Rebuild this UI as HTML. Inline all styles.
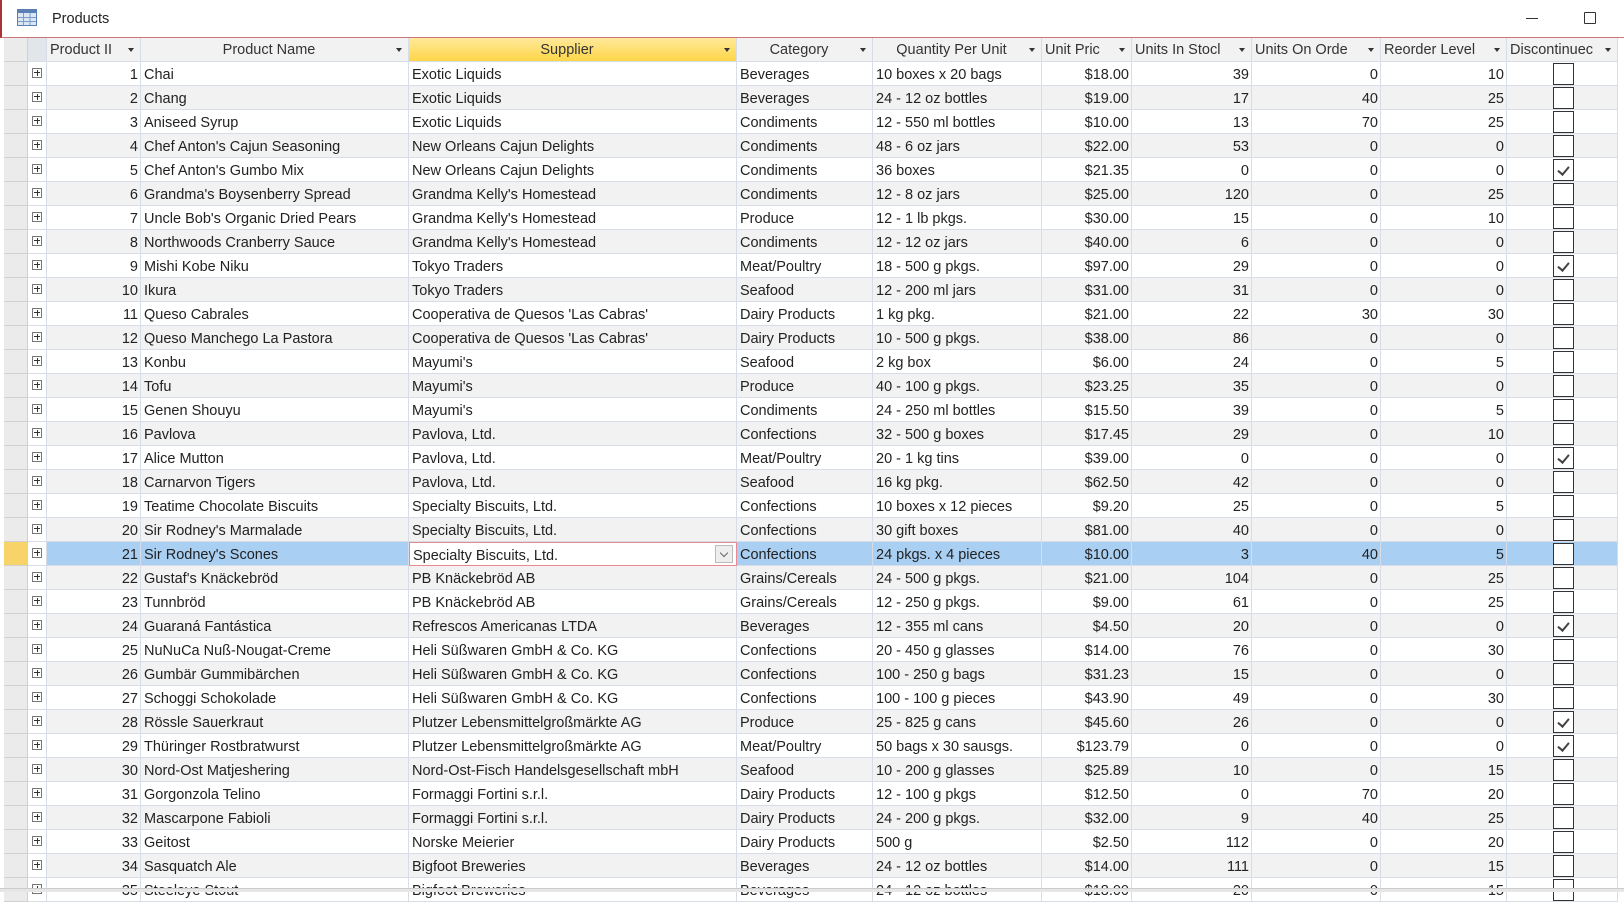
<!DOCTYPE html>
<html><head><meta charset="utf-8"><style>
*{box-sizing:border-box;margin:0;padding:0}
body{width:1624px;height:892px;overflow:hidden;background:#fff;font-family:"Liberation Sans",sans-serif;font-size:14.5px;color:#222;position:relative}
#title{position:absolute;left:0;top:0;width:1624px;height:38px;border-left:2px solid #a33;border-bottom:1px solid #c8777a;background:#fff}
#title .t{position:absolute;left:50px;top:11px;font-size:14.5px;color:#222}
#grid{position:absolute;left:4px;top:38px;width:1614px}
.r{display:flex;height:24px}
.c{height:24px;border-right:1px solid #d7dde6;border-bottom:1px solid #d7dde6;white-space:nowrap;overflow:hidden;line-height:26px;padding:0 3px}
.n{text-align:right;padding-right:2px}
.r:nth-child(odd) .c{background:#f2f2f2}
.r .c.s{background:#ebebeb !important;border-right:1px solid #d0d0d0;border-bottom:1px solid #d0d0d0}
.h .c{background:#e2e5ea;color:#333;position:relative;padding-right:14px;line-height:25px}
.h .c:after{content:"";position:absolute;right:6px;top:10px;border:3px solid transparent;border-top:4px solid #333}
.h .c.s:after,.h .c.e:after{display:none}
.h .y{background:linear-gradient(#ffe99a,#fdd648)!important}
.e{background:#fff !important;position:relative}
.e i{position:absolute;left:4px;top:6px;width:10px;height:10px;border:1px solid #777;background:#fff}
.e i:before{content:"";position:absolute;left:1px;top:3px;width:6px;height:1px;background:#333}
.e i:after{content:"";position:absolute;left:3.5px;top:1px;width:1px;height:6px;background:#333}
.w0{width:24px}.w1{width:19px}.w2{width:94px}.w3{width:268px}.w4{width:328px}.w5{width:136px}.w6{width:169px}.w7{width:90px}.w8{width:120px}.w9{width:129px}.w10{width:126px}.w11{width:111px}
.d{position:relative}
.d b{position:absolute;left:46px;top:1px;width:21px;height:22px;border:1px solid #333;background:#fff}
.d b.k:after{content:"";position:absolute;left:6px;top:4px;width:5px;height:9px;border-right:2px solid #444;border-bottom:2px solid #444;transform:rotate(40deg)}
.sel .c{background:#a9cff2 !important}
.sel .c.s{background:#f8d468 !important}
.sel .c.e{background:#fff !important}
.sel .ed{background:#fff !important;border:1px solid #e88a94;position:relative}
.ed u{position:absolute;right:3px;top:2px;width:18px;height:18px;border:1px solid #bbb;background:#eee;text-decoration:none}
.ed u:after{content:"";position:absolute;left:5px;top:4px;width:5px;height:5px;border-right:1px solid #666;border-bottom:1px solid #666;transform:rotate(45deg)}
</style></head><body>
<div id="title">
<svg style="position:absolute;left:15px;top:9px" width="20" height="17" viewBox="0 0 20 17"><rect x="0.5" y="0.5" width="19" height="16" fill="#dbe6f4" stroke="#5a7fb4"/><rect x="1" y="1" width="18" height="3" fill="#5a7fb4"/><path d="M1 8.5H19M1 12.5H19M6.5 4V16M13 4V16" stroke="#7d9cc8"/></svg>
<div class="t">Products</div>
<div style="position:absolute;left:1524px;top:18px;width:12px;height:1px;background:#333"></div>
<div style="position:absolute;left:1582px;top:12px;width:12px;height:12px;border:1px solid #333;border-radius:1px"></div>
</div>
<div id="grid">
<div class="r h"><div class="c s w0"></div><div class="c e w1" style="background:#e2e5ea!important"></div><div class="c w2">Product II</div><div class="c w3" style="text-align:center">Product Name</div><div class="c w4 y" style="text-align:center">Supplier</div><div class="c w5" style="text-align:center">Category</div><div class="c w6" style="text-align:center">Quantity Per Unit</div><div class="c w7">Unit Pric</div><div class="c w8">Units In Stocl</div><div class="c w9">Units On Orde</div><div class="c w10">Reorder Level</div><div class="c w11">Discontinuec</div></div>
<div class="r"><div class="c s w0"></div><div class="c e w1"><i></i></div><div class="c n w2">1</div><div class="c w3">Chai</div><div class="c w4">Exotic Liquids</div><div class="c w5">Beverages</div><div class="c w6">10 boxes x 20 bags</div><div class="c n w7">$18.00</div><div class="c n w8">39</div><div class="c n w9">0</div><div class="c n w10">10</div><div class="c d w11"><b></b></div></div>
<div class="r"><div class="c s w0"></div><div class="c e w1"><i></i></div><div class="c n w2">2</div><div class="c w3">Chang</div><div class="c w4">Exotic Liquids</div><div class="c w5">Beverages</div><div class="c w6">24 - 12 oz bottles</div><div class="c n w7">$19.00</div><div class="c n w8">17</div><div class="c n w9">40</div><div class="c n w10">25</div><div class="c d w11"><b></b></div></div>
<div class="r"><div class="c s w0"></div><div class="c e w1"><i></i></div><div class="c n w2">3</div><div class="c w3">Aniseed Syrup</div><div class="c w4">Exotic Liquids</div><div class="c w5">Condiments</div><div class="c w6">12 - 550 ml bottles</div><div class="c n w7">$10.00</div><div class="c n w8">13</div><div class="c n w9">70</div><div class="c n w10">25</div><div class="c d w11"><b></b></div></div>
<div class="r"><div class="c s w0"></div><div class="c e w1"><i></i></div><div class="c n w2">4</div><div class="c w3">Chef Anton's Cajun Seasoning</div><div class="c w4">New Orleans Cajun Delights</div><div class="c w5">Condiments</div><div class="c w6">48 - 6 oz jars</div><div class="c n w7">$22.00</div><div class="c n w8">53</div><div class="c n w9">0</div><div class="c n w10">0</div><div class="c d w11"><b></b></div></div>
<div class="r"><div class="c s w0"></div><div class="c e w1"><i></i></div><div class="c n w2">5</div><div class="c w3">Chef Anton's Gumbo Mix</div><div class="c w4">New Orleans Cajun Delights</div><div class="c w5">Condiments</div><div class="c w6">36 boxes</div><div class="c n w7">$21.35</div><div class="c n w8">0</div><div class="c n w9">0</div><div class="c n w10">0</div><div class="c d w11"><b class="k"></b></div></div>
<div class="r"><div class="c s w0"></div><div class="c e w1"><i></i></div><div class="c n w2">6</div><div class="c w3">Grandma's Boysenberry Spread</div><div class="c w4">Grandma Kelly's Homestead</div><div class="c w5">Condiments</div><div class="c w6">12 - 8 oz jars</div><div class="c n w7">$25.00</div><div class="c n w8">120</div><div class="c n w9">0</div><div class="c n w10">25</div><div class="c d w11"><b></b></div></div>
<div class="r"><div class="c s w0"></div><div class="c e w1"><i></i></div><div class="c n w2">7</div><div class="c w3">Uncle Bob's Organic Dried Pears</div><div class="c w4">Grandma Kelly's Homestead</div><div class="c w5">Produce</div><div class="c w6">12 - 1 lb pkgs.</div><div class="c n w7">$30.00</div><div class="c n w8">15</div><div class="c n w9">0</div><div class="c n w10">10</div><div class="c d w11"><b></b></div></div>
<div class="r"><div class="c s w0"></div><div class="c e w1"><i></i></div><div class="c n w2">8</div><div class="c w3">Northwoods Cranberry Sauce</div><div class="c w4">Grandma Kelly's Homestead</div><div class="c w5">Condiments</div><div class="c w6">12 - 12 oz jars</div><div class="c n w7">$40.00</div><div class="c n w8">6</div><div class="c n w9">0</div><div class="c n w10">0</div><div class="c d w11"><b></b></div></div>
<div class="r"><div class="c s w0"></div><div class="c e w1"><i></i></div><div class="c n w2">9</div><div class="c w3">Mishi Kobe Niku</div><div class="c w4">Tokyo Traders</div><div class="c w5">Meat/Poultry</div><div class="c w6">18 - 500 g pkgs.</div><div class="c n w7">$97.00</div><div class="c n w8">29</div><div class="c n w9">0</div><div class="c n w10">0</div><div class="c d w11"><b class="k"></b></div></div>
<div class="r"><div class="c s w0"></div><div class="c e w1"><i></i></div><div class="c n w2">10</div><div class="c w3">Ikura</div><div class="c w4">Tokyo Traders</div><div class="c w5">Seafood</div><div class="c w6">12 - 200 ml jars</div><div class="c n w7">$31.00</div><div class="c n w8">31</div><div class="c n w9">0</div><div class="c n w10">0</div><div class="c d w11"><b></b></div></div>
<div class="r"><div class="c s w0"></div><div class="c e w1"><i></i></div><div class="c n w2">11</div><div class="c w3">Queso Cabrales</div><div class="c w4">Cooperativa de Quesos 'Las Cabras'</div><div class="c w5">Dairy Products</div><div class="c w6">1 kg pkg.</div><div class="c n w7">$21.00</div><div class="c n w8">22</div><div class="c n w9">30</div><div class="c n w10">30</div><div class="c d w11"><b></b></div></div>
<div class="r"><div class="c s w0"></div><div class="c e w1"><i></i></div><div class="c n w2">12</div><div class="c w3">Queso Manchego La Pastora</div><div class="c w4">Cooperativa de Quesos 'Las Cabras'</div><div class="c w5">Dairy Products</div><div class="c w6">10 - 500 g pkgs.</div><div class="c n w7">$38.00</div><div class="c n w8">86</div><div class="c n w9">0</div><div class="c n w10">0</div><div class="c d w11"><b></b></div></div>
<div class="r"><div class="c s w0"></div><div class="c e w1"><i></i></div><div class="c n w2">13</div><div class="c w3">Konbu</div><div class="c w4">Mayumi's</div><div class="c w5">Seafood</div><div class="c w6">2 kg box</div><div class="c n w7">$6.00</div><div class="c n w8">24</div><div class="c n w9">0</div><div class="c n w10">5</div><div class="c d w11"><b></b></div></div>
<div class="r"><div class="c s w0"></div><div class="c e w1"><i></i></div><div class="c n w2">14</div><div class="c w3">Tofu</div><div class="c w4">Mayumi's</div><div class="c w5">Produce</div><div class="c w6">40 - 100 g pkgs.</div><div class="c n w7">$23.25</div><div class="c n w8">35</div><div class="c n w9">0</div><div class="c n w10">0</div><div class="c d w11"><b></b></div></div>
<div class="r"><div class="c s w0"></div><div class="c e w1"><i></i></div><div class="c n w2">15</div><div class="c w3">Genen Shouyu</div><div class="c w4">Mayumi's</div><div class="c w5">Condiments</div><div class="c w6">24 - 250 ml bottles</div><div class="c n w7">$15.50</div><div class="c n w8">39</div><div class="c n w9">0</div><div class="c n w10">5</div><div class="c d w11"><b></b></div></div>
<div class="r"><div class="c s w0"></div><div class="c e w1"><i></i></div><div class="c n w2">16</div><div class="c w3">Pavlova</div><div class="c w4">Pavlova, Ltd.</div><div class="c w5">Confections</div><div class="c w6">32 - 500 g boxes</div><div class="c n w7">$17.45</div><div class="c n w8">29</div><div class="c n w9">0</div><div class="c n w10">10</div><div class="c d w11"><b></b></div></div>
<div class="r"><div class="c s w0"></div><div class="c e w1"><i></i></div><div class="c n w2">17</div><div class="c w3">Alice Mutton</div><div class="c w4">Pavlova, Ltd.</div><div class="c w5">Meat/Poultry</div><div class="c w6">20 - 1 kg tins</div><div class="c n w7">$39.00</div><div class="c n w8">0</div><div class="c n w9">0</div><div class="c n w10">0</div><div class="c d w11"><b class="k"></b></div></div>
<div class="r"><div class="c s w0"></div><div class="c e w1"><i></i></div><div class="c n w2">18</div><div class="c w3">Carnarvon Tigers</div><div class="c w4">Pavlova, Ltd.</div><div class="c w5">Seafood</div><div class="c w6">16 kg pkg.</div><div class="c n w7">$62.50</div><div class="c n w8">42</div><div class="c n w9">0</div><div class="c n w10">0</div><div class="c d w11"><b></b></div></div>
<div class="r"><div class="c s w0"></div><div class="c e w1"><i></i></div><div class="c n w2">19</div><div class="c w3">Teatime Chocolate Biscuits</div><div class="c w4">Specialty Biscuits, Ltd.</div><div class="c w5">Confections</div><div class="c w6">10 boxes x 12 pieces</div><div class="c n w7">$9.20</div><div class="c n w8">25</div><div class="c n w9">0</div><div class="c n w10">5</div><div class="c d w11"><b></b></div></div>
<div class="r"><div class="c s w0"></div><div class="c e w1"><i></i></div><div class="c n w2">20</div><div class="c w3">Sir Rodney's Marmalade</div><div class="c w4">Specialty Biscuits, Ltd.</div><div class="c w5">Confections</div><div class="c w6">30 gift boxes</div><div class="c n w7">$81.00</div><div class="c n w8">40</div><div class="c n w9">0</div><div class="c n w10">0</div><div class="c d w11"><b></b></div></div>
<div class="r sel"><div class="c s w0"></div><div class="c e w1"><i></i></div><div class="c n w2">21</div><div class="c w3">Sir Rodney's Scones</div><div class="c w4 ed">Specialty Biscuits, Ltd.<u></u></div><div class="c w5">Confections</div><div class="c w6">24 pkgs. x 4 pieces</div><div class="c n w7">$10.00</div><div class="c n w8">3</div><div class="c n w9">40</div><div class="c n w10">5</div><div class="c d w11"><b></b></div></div>
<div class="r"><div class="c s w0"></div><div class="c e w1"><i></i></div><div class="c n w2">22</div><div class="c w3">Gustaf's Knäckebröd</div><div class="c w4">PB Knäckebröd AB</div><div class="c w5">Grains/Cereals</div><div class="c w6">24 - 500 g pkgs.</div><div class="c n w7">$21.00</div><div class="c n w8">104</div><div class="c n w9">0</div><div class="c n w10">25</div><div class="c d w11"><b></b></div></div>
<div class="r"><div class="c s w0"></div><div class="c e w1"><i></i></div><div class="c n w2">23</div><div class="c w3">Tunnbröd</div><div class="c w4">PB Knäckebröd AB</div><div class="c w5">Grains/Cereals</div><div class="c w6">12 - 250 g pkgs.</div><div class="c n w7">$9.00</div><div class="c n w8">61</div><div class="c n w9">0</div><div class="c n w10">25</div><div class="c d w11"><b></b></div></div>
<div class="r"><div class="c s w0"></div><div class="c e w1"><i></i></div><div class="c n w2">24</div><div class="c w3">Guaraná Fantástica</div><div class="c w4">Refrescos Americanas LTDA</div><div class="c w5">Beverages</div><div class="c w6">12 - 355 ml cans</div><div class="c n w7">$4.50</div><div class="c n w8">20</div><div class="c n w9">0</div><div class="c n w10">0</div><div class="c d w11"><b class="k"></b></div></div>
<div class="r"><div class="c s w0"></div><div class="c e w1"><i></i></div><div class="c n w2">25</div><div class="c w3">NuNuCa Nuß-Nougat-Creme</div><div class="c w4">Heli Süßwaren GmbH &amp; Co. KG</div><div class="c w5">Confections</div><div class="c w6">20 - 450 g glasses</div><div class="c n w7">$14.00</div><div class="c n w8">76</div><div class="c n w9">0</div><div class="c n w10">30</div><div class="c d w11"><b></b></div></div>
<div class="r"><div class="c s w0"></div><div class="c e w1"><i></i></div><div class="c n w2">26</div><div class="c w3">Gumbär Gummibärchen</div><div class="c w4">Heli Süßwaren GmbH &amp; Co. KG</div><div class="c w5">Confections</div><div class="c w6">100 - 250 g bags</div><div class="c n w7">$31.23</div><div class="c n w8">15</div><div class="c n w9">0</div><div class="c n w10">0</div><div class="c d w11"><b></b></div></div>
<div class="r"><div class="c s w0"></div><div class="c e w1"><i></i></div><div class="c n w2">27</div><div class="c w3">Schoggi Schokolade</div><div class="c w4">Heli Süßwaren GmbH &amp; Co. KG</div><div class="c w5">Confections</div><div class="c w6">100 - 100 g pieces</div><div class="c n w7">$43.90</div><div class="c n w8">49</div><div class="c n w9">0</div><div class="c n w10">30</div><div class="c d w11"><b></b></div></div>
<div class="r"><div class="c s w0"></div><div class="c e w1"><i></i></div><div class="c n w2">28</div><div class="c w3">Rössle Sauerkraut</div><div class="c w4">Plutzer Lebensmittelgroßmärkte AG</div><div class="c w5">Produce</div><div class="c w6">25 - 825 g cans</div><div class="c n w7">$45.60</div><div class="c n w8">26</div><div class="c n w9">0</div><div class="c n w10">0</div><div class="c d w11"><b class="k"></b></div></div>
<div class="r"><div class="c s w0"></div><div class="c e w1"><i></i></div><div class="c n w2">29</div><div class="c w3">Thüringer Rostbratwurst</div><div class="c w4">Plutzer Lebensmittelgroßmärkte AG</div><div class="c w5">Meat/Poultry</div><div class="c w6">50 bags x 30 sausgs.</div><div class="c n w7">$123.79</div><div class="c n w8">0</div><div class="c n w9">0</div><div class="c n w10">0</div><div class="c d w11"><b class="k"></b></div></div>
<div class="r"><div class="c s w0"></div><div class="c e w1"><i></i></div><div class="c n w2">30</div><div class="c w3">Nord-Ost Matjeshering</div><div class="c w4">Nord-Ost-Fisch Handelsgesellschaft mbH</div><div class="c w5">Seafood</div><div class="c w6">10 - 200 g glasses</div><div class="c n w7">$25.89</div><div class="c n w8">10</div><div class="c n w9">0</div><div class="c n w10">15</div><div class="c d w11"><b></b></div></div>
<div class="r"><div class="c s w0"></div><div class="c e w1"><i></i></div><div class="c n w2">31</div><div class="c w3">Gorgonzola Telino</div><div class="c w4">Formaggi Fortini s.r.l.</div><div class="c w5">Dairy Products</div><div class="c w6">12 - 100 g pkgs</div><div class="c n w7">$12.50</div><div class="c n w8">0</div><div class="c n w9">70</div><div class="c n w10">20</div><div class="c d w11"><b></b></div></div>
<div class="r"><div class="c s w0"></div><div class="c e w1"><i></i></div><div class="c n w2">32</div><div class="c w3">Mascarpone Fabioli</div><div class="c w4">Formaggi Fortini s.r.l.</div><div class="c w5">Dairy Products</div><div class="c w6">24 - 200 g pkgs.</div><div class="c n w7">$32.00</div><div class="c n w8">9</div><div class="c n w9">40</div><div class="c n w10">25</div><div class="c d w11"><b></b></div></div>
<div class="r"><div class="c s w0"></div><div class="c e w1"><i></i></div><div class="c n w2">33</div><div class="c w3">Geitost</div><div class="c w4">Norske Meierier</div><div class="c w5">Dairy Products</div><div class="c w6">500 g</div><div class="c n w7">$2.50</div><div class="c n w8">112</div><div class="c n w9">0</div><div class="c n w10">20</div><div class="c d w11"><b></b></div></div>
<div class="r"><div class="c s w0"></div><div class="c e w1"><i></i></div><div class="c n w2">34</div><div class="c w3">Sasquatch Ale</div><div class="c w4">Bigfoot Breweries</div><div class="c w5">Beverages</div><div class="c w6">24 - 12 oz bottles</div><div class="c n w7">$14.00</div><div class="c n w8">111</div><div class="c n w9">0</div><div class="c n w10">15</div><div class="c d w11"><b></b></div></div>
<div class="r"><div class="c s w0"></div><div class="c e w1"><i></i></div><div class="c n w2">35</div><div class="c w3">Steeleye Stout</div><div class="c w4">Bigfoot Breweries</div><div class="c w5">Beverages</div><div class="c w6">24 - 12 oz bottles</div><div class="c n w7">$18.00</div><div class="c n w8">20</div><div class="c n w9">0</div><div class="c n w10">15</div><div class="c d w11"><b></b></div></div>
</div>
<div style="position:absolute;left:0;top:888px;width:1624px;height:4px;background:#e6e6e6;border-top:1px solid #ccc"></div>
</body></html>
